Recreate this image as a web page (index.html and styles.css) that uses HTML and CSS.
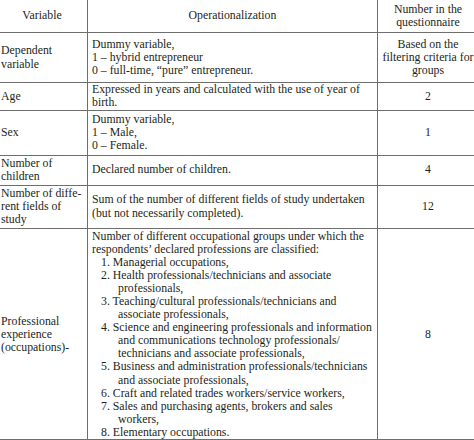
FILE: index.html
```html
<!DOCTYPE html>
<html lang="en">
<head>
<meta charset="utf-8">
<title>Variables and operationalization</title>
<link rel="stylesheet" href="styles.css">
</head>
<body>
<table class="vars">
  <colgroup>
    <col class="c-var">
    <col class="c-op">
    <col class="c-num">
  </colgroup>
  <thead>
    <tr class="r-head">
      <th class="center">Variable</th>
      <th class="center">Operationalization</th>
      <th class="center">Number in the<br>questionnaire</th>
    </tr>
  </thead>
  <tbody>
    <tr class="r-dep">
      <td>Dependent<br>variable</td>
      <td>Dummy variable,<br>1 – hybrid entrepreneur<br>0 – full-time, “pure” entrepreneur.</td>
      <td class="center">Based on the<br>filtering criteria for<br>groups</td>
    </tr>
    <tr class="r-age">
      <td>Age</td>
      <td>Expressed in years and calculated with the use of year of<br>birth.</td>
      <td class="center">2</td>
    </tr>
    <tr class="r-sex">
      <td>Sex</td>
      <td>Dummy variable,<br>1 – Male,<br>0 – Female.</td>
      <td class="center">1</td>
    </tr>
    <tr class="r-kids">
      <td>Number of<br>children</td>
      <td>Declared number of children.</td>
      <td class="center">4</td>
    </tr>
    <tr class="r-fields">
      <td>Number of diffe-<br>rent fields of<br>study</td>
      <td>Sum of the number of different fields of study undertaken<br>(but not necessarily completed).</td>
      <td class="center">12</td>
    </tr>
    <tr class="r-occ">
      <td>Professional<br>experience<br>(occupations)-</td>
      <td class="occ">
        <div>Number of different occupational groups under which the<br>respondents’ declared professions are classified:</div>
        <div class="item">1. Managerial occupations,</div>
        <div class="item">2. Health professionals/technicians and associate<br>professionals,</div>
        <div class="item">3. Teaching/cultural professionals/technicians and<br>associate professionals,</div>
        <div class="item">4. Science and engineering professionals and information<br>and communications technology professionals/<br>technicians and associate professionals,</div>
        <div class="item">5. Business and administration professionals/technicians<br>and associate professionals,</div>
        <div class="item">6. Craft and related trades workers/service workers,</div>
        <div class="item">7. Sales and purchasing agents, brokers and sales<br>workers,</div>
        <div class="item">8. Elementary occupations.</div>
      </td>
      <td class="center">8</td>
    </tr>
  </tbody>
</table>
</body>
</html>
```

FILE: styles.css
```css
html, body {
  margin: 0;
  padding: 0;
  background: #ffffff;
  overflow: hidden;
}

body {
  width: 474px;
  height: 440px;
}

.vars {
  border-collapse: collapse;
  table-layout: fixed;
  width: 482px;
  margin-left: -4px;
  margin-top: -1px;
  font-family: "Liberation Serif", "Times New Roman", serif;
  font-size: 11.8px;
  line-height: 13.25px;
  color: #231f20;
}

.c-var { width: 91px; }
.c-op { width: 290px; }
.c-num { width: 101px; }

.vars th,
.vars td {
  border: 1px solid #6e6e6e;
  padding: 0 4px;
  vertical-align: middle;
  text-align: left;
  white-space: nowrap;
  font-weight: normal;
}

.vars .center {
  text-align: center;
}

.r-head { height: 33px; }
.r-dep { height: 50px; }
.r-age { height: 26px; }
.r-sex { height: 45px; }
.r-kids { height: 30px; }
.r-fields { height: 43px; }

.r-occ td {
  padding-top: 1px;
  padding-bottom: 0;
  line-height: 13.1px;
}

.occ .item {
  padding-left: 26px;
  text-indent: -17px;
}
```
